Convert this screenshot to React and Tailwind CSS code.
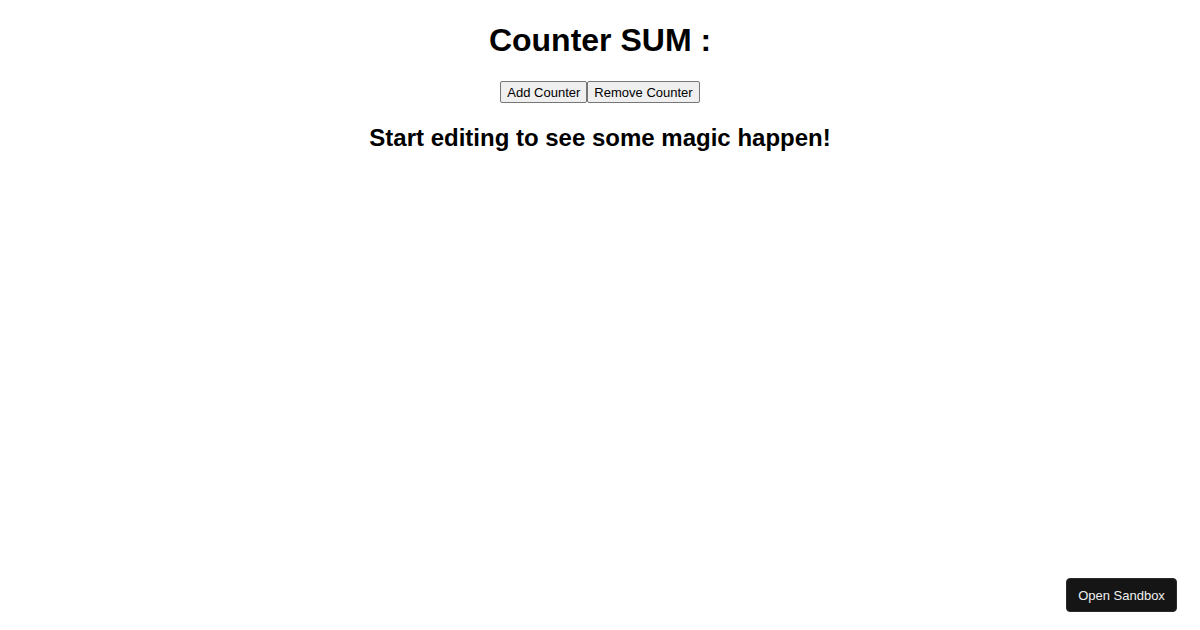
import { useState } from 'react'

const Counter = ({ value }) => (
  <div className="text-[16px]">{value}</div>
)

export default function App() {
  const [counters, setCounters] = useState([])

  const addCounter = () => setCounters([...counters, 0])
  const removeCounter = () => setCounters(counters.slice(0, -1))

  return (
    <div className="min-h-[630px] bg-white text-black text-center font-['Liberation_Sans',Arial,sans-serif] leading-[normal]">
      <h1 className="text-[32px] font-bold mt-[22px] mb-[22px]">Counter SUM :</h1>
      <div className="flex justify-center">
        <button
          onClick={addCounter}
          className="h-[22px] border border-[#767676] bg-[#efefef] rounded-[2px] px-[6px] text-[13px] leading-[normal]"
        >
          Add Counter
        </button>
        <button
          onClick={removeCounter}
          className="h-[22px] border border-[#767676] bg-[#efefef] rounded-[2px] px-[6px] text-[13px] leading-[normal]"
        >
          Remove Counter
        </button>
      </div>
      {counters.map((c, i) => (
        <Counter key={i} value={c} />
      ))}
      <h2 className="text-[24px] font-bold mt-[21px] mb-[20px]">Start editing to see some magic happen!</h2>

      <a className="fixed right-[23px] bottom-[18px] w-[111px] h-[34px] flex items-center justify-center rounded-[4px] bg-[#151515] text-[13px] text-[#f0f0f0] border border-[#2a2a2a]">
        Open Sandbox
      </a>
    </div>
  )
}
